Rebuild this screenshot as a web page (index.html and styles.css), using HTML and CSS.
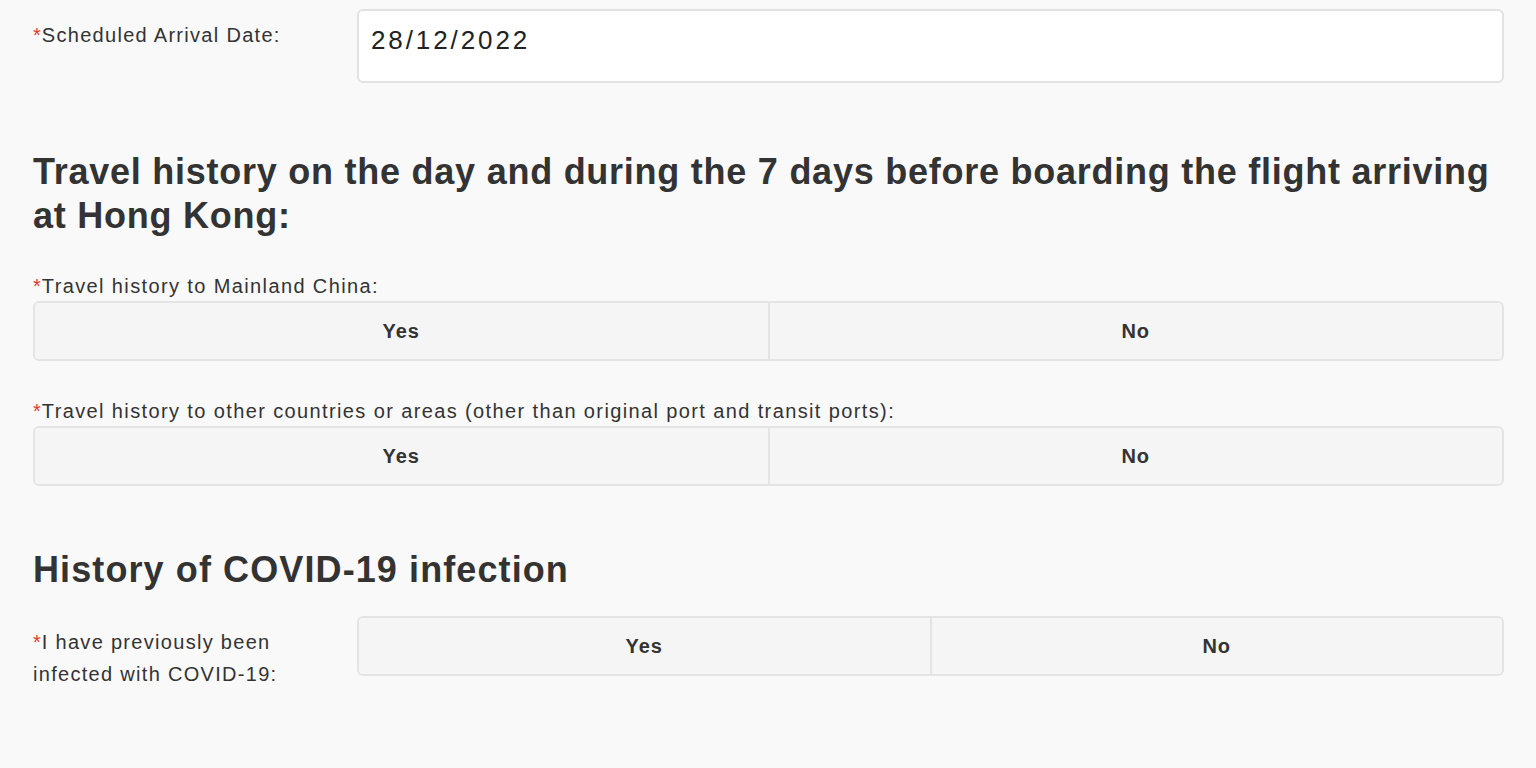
FILE: index.html
```html
<!DOCTYPE html>
<html lang="en">
<head>
    <meta charset="UTF-8">
    <meta name="viewport" content="width=device-width, initial-scale=1.0">
    <title>Health Declaration</title>
    <link rel="stylesheet" href="styles.css">
</head>
<body>
    <div class="form">
        <div class="row">
            <label class="side-label"><span class="req">*</span>Scheduled Arrival Date:</label>
            <div class="date-input">28/12/2022</div>
        </div>

        <h2 class="section-title">Travel history on the day and during the 7 days before boarding the flight arriving at Hong Kong:</h2>

        <div class="field">
            <label class="top-label"><span class="req">*</span>Travel history to Mainland China:</label>
            <div class="choice">
                <button>Yes</button>
                <button>No</button>
            </div>
        </div>

        <div class="field">
            <label class="top-label"><span class="req">*</span>Travel history to other countries or areas (other than original port and transit ports):</label>
            <div class="choice">
                <button>Yes</button>
                <button>No</button>
            </div>
        </div>

        <h2 class="section-title short">History of COVID-19 infection</h2>

        <div class="row">
            <label class="side-label two-line"><span class="req">*</span>I have previously been infected with COVID-19:</label>
            <div class="choice">
                <button>Yes</button>
                <button>No</button>
            </div>
        </div>
    </div>
</body>
</html>
```

FILE: styles.css
```css
body {
    margin: 0;
    background: #f9f9f9;
    color: #333;
    font-family: "Liberation Sans", Arial, sans-serif;
}

.form {
    padding: 9px 32px 40px 33px;
}

.row {
    display: flex;
    align-items: flex-start;
}

.side-label {
    width: 324px;
    flex-shrink: 0;
    font-size: 20px;
    letter-spacing: 1.3px;
    line-height: 32px;
    padding-top: 10px;
}

.side-label.two-line {
    padding-top: 10px;
    padding-right: 20px;
    box-sizing: border-box;
}

.req {
    color: #e0392b;
    letter-spacing: 0;
    margin-right: 1px;
}

.date-input {
    flex: 1;
    height: 74px;
    box-sizing: border-box;
    background: #fff;
    border: 2px solid #e2e2e2;
    border-radius: 6px;
    padding: 12px 12px;
    font-size: 26px;
    letter-spacing: 2.9px;
    line-height: 34px;
    color: #222;
}

.section-title {
    margin: 67px 0 33px;
    font-size: 36px;
    letter-spacing: 0.75px;
    line-height: 44px;
    font-weight: bold;
    color: #333;
}

.section-title.short {
    margin: 62px 0 24px;
    letter-spacing: 1.1px;
}

.field {
    margin-bottom: 35px;
}

.top-label {
    display: block;
    font-size: 20px;
    letter-spacing: 1.38px;
    line-height: 30px;
}

.choice {
    flex: 1;
    display: flex;
    height: 60px;
    box-sizing: border-box;
    border: 2px solid #e4e4e4;
    border-radius: 6px;
    background: #f5f5f5;
    overflow: hidden;
}

.choice button {
    flex: 1;
    border: none;
    background: #f5f5f5;
    font-family: inherit;
    font-size: 20px;
    letter-spacing: 1px;
    font-weight: bold;
    color: #333;
    padding-top: 2px;
    cursor: pointer;
}

.choice button + button {
    border-left: 2px solid #e4e4e4;
}
```
